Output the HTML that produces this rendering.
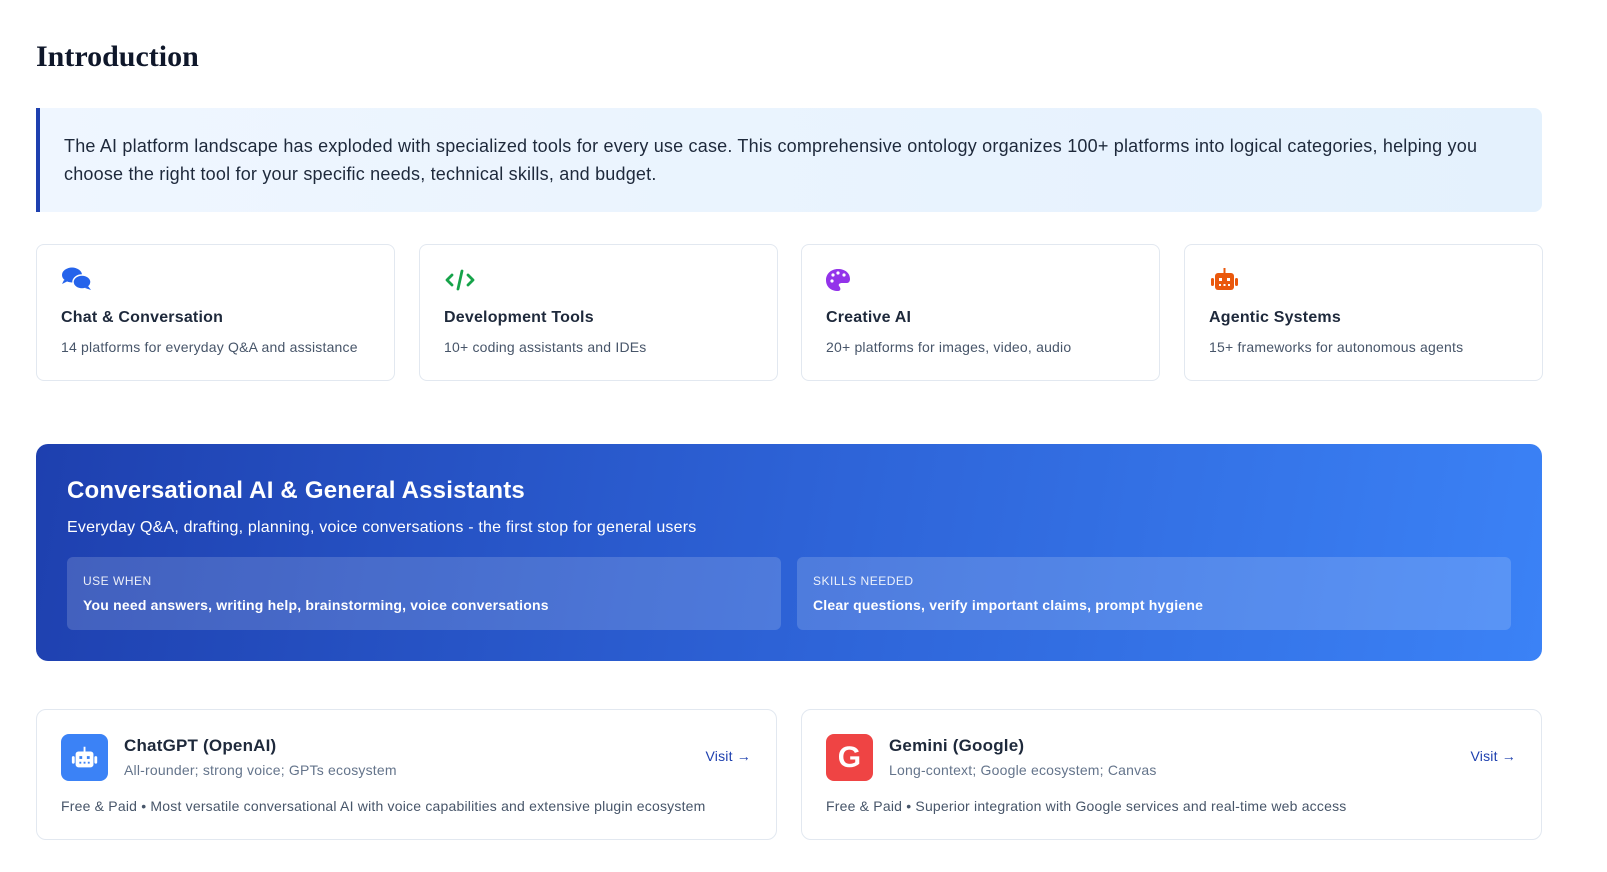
<!DOCTYPE html>
<html><head><meta charset="utf-8"><style>
*{box-sizing:border-box;margin:0;padding:0}
body{width:1607px;height:872px;background:#fff;font-family:"Liberation Sans",sans-serif;color:#1e293b;position:relative;overflow:hidden;letter-spacing:.2px}
h1{position:absolute;left:36px;top:40px;font-family:"Liberation Serif",serif;font-size:30px;font-weight:bold;color:#0f172a;letter-spacing:0}
.intro{position:absolute;left:36px;top:108px;width:1506px;height:104px;border-left:4px solid #1e40af;background:linear-gradient(90deg,#eff6ff,#e4f1fd);border-radius:0 8px 8px 0;padding:24px 24px 0 24px;font-size:18px;line-height:28px;color:#1e293b}
.card{position:absolute;top:244px;width:359px;height:137px;border:1px solid #e2e8f0;border-radius:8px;padding:22px 24px}
.card svg{display:block;height:26px}
.card h3{font-size:16px;font-weight:bold;margin-top:16px;color:#1e293b}
.card p{font-size:14px;color:#475569;margin-top:12px}
.banner{position:absolute;left:36px;top:444px;width:1506px;height:217px;border-radius:12px;background:linear-gradient(100deg,#1e40af 0%,#2d62d6 50%,#3b82f6 100%);color:#fff;padding:33px 31px}
.banner h2{font-size:24px;font-weight:bold}
.banner .sub{font-size:16px;margin-top:14px}
.box{position:absolute;top:113px;width:714px;height:73px;background:rgba(255,255,255,.16);border-radius:6px;padding:17px 16px}
.box .l{font-size:12px;letter-spacing:.5px;opacity:.9}
.box .t{font-size:14px;font-weight:bold;margin-top:9px}
.tool{position:absolute;top:709px;width:741px;height:131px;border:1px solid #e2e8f0;border-radius:10px}
.ic{position:absolute;left:24px;top:24px;width:47px;height:47px;border-radius:8px;display:flex;align-items:center;justify-content:center}
.tool h4{position:absolute;left:87px;top:26px;font-size:17px;font-weight:bold;color:#1e293b}
.tool .s{position:absolute;left:87px;top:52px;font-size:14px;color:#64748b}
.tool .d{position:absolute;left:24px;top:88px;font-size:14px;color:#475569}
.tool .v{position:absolute;right:25px;top:38px;font-size:14px;color:#1e40af}
</style></head><body>
<h1>Introduction</h1>
<div class="intro">The AI platform landscape has exploded with specialized tools for every use case. This comprehensive ontology organizes 100+ platforms into logical categories, helping you<br>choose the right tool for your specific needs, technical skills, and budget.</div>

<div class="card" style="left:36px"><svg width="32" height="26" viewBox="0 0 32 26"><ellipse cx="11" cy="8" rx="10" ry="7.5" fill="#2563eb"/><path d="M3 13 L1 17 L7 14Z" fill="#2563eb"/><ellipse cx="21" cy="15" rx="9" ry="7" fill="#2563eb" stroke="#fff" stroke-width="1.5"/><path d="M27 19 L30 23 L24 21Z" fill="#2563eb"/></svg><h3>Chat &amp; Conversation</h3><p>14 platforms for everyday Q&amp;A and assistance</p></div>
<div class="card" style="left:419px"><svg width="32" height="26" viewBox="0 0 32 26"><path d="M8 8 L3 13 L8 18 M24 8 L29 13 L24 18 M18 4 L14 22" stroke="#16a34a" stroke-width="2.8" fill="none" stroke-linecap="round" stroke-linejoin="round"/></svg><h3>Development Tools</h3><p>10+ coding assistants and IDEs</p></div>
<div class="card" style="left:801px"><svg width="26" height="26" viewBox="0 0 26 26"><path d="M12 2 C5 2 0 7 0 13 C0 20 5 24 12 24 C15 24 15 21 13 19 C12 17 14 16 16 16 L21 16 C23 16 24 14 24 12 C24 6 19 2 12 2Z" fill="#9333ea"/><circle cx="6" cy="14" r="1.6" fill="#fff"/><circle cx="7" cy="8" r="1.6" fill="#fff"/><circle cx="12" cy="6" r="1.6" fill="#fff"/><circle cx="18" cy="8" r="1.6" fill="#fff"/></svg><h3>Creative AI</h3><p>20+ platforms for images, video, audio</p></div>
<div class="card" style="left:1184px"><svg width="32" height="26" viewBox="0 0 32 26"><rect x="14.5" y="1" width="2" height="6" fill="#ea580c"/><rect x="6" y="6" width="19" height="17" rx="3" fill="#ea580c"/><rect x="2" y="11" width="3" height="8" rx="1.5" fill="#ea580c"/><rect x="26" y="11" width="3" height="8" rx="1.5" fill="#ea580c"/><rect x="10" y="11" width="3" height="3" fill="#fff"/><rect x="18" y="11" width="3" height="3" fill="#fff"/><rect x="10" y="17" width="2" height="2" fill="#fff"/><rect x="14.5" y="17" width="2" height="2" fill="#fff"/><rect x="19" y="17" width="2" height="2" fill="#fff"/></svg><h3>Agentic Systems</h3><p>15+ frameworks for autonomous agents</p></div>

<div class="banner"><h2>Conversational AI &amp; General Assistants</h2><div class="sub">Everyday Q&amp;A, drafting, planning, voice conversations - the first stop for general users</div>
<div class="box" style="left:31px"><div class="l">USE WHEN</div><div class="t">You need answers, writing help, brainstorming, voice conversations</div></div>
<div class="box" style="left:761px"><div class="l">SKILLS NEEDED</div><div class="t">Clear questions, verify important claims, prompt hygiene</div></div></div>

<div class="tool" style="left:36px"><div class="ic" style="background:#3b82f6"><svg width="30" height="26" viewBox="0 0 32 26"><rect x="14.5" y="1" width="2" height="6" fill="#fff"/><rect x="6" y="6" width="19" height="17" rx="3" fill="#fff"/><rect x="2" y="11" width="3" height="8" rx="1.5" fill="#fff"/><rect x="26" y="11" width="3" height="8" rx="1.5" fill="#fff"/><rect x="10" y="11" width="3" height="3" fill="#3b82f6"/><rect x="18" y="11" width="3" height="3" fill="#3b82f6"/><rect x="10" y="17" width="2" height="2" fill="#3b82f6"/><rect x="14.5" y="17" width="2" height="2" fill="#3b82f6"/><rect x="19" y="17" width="2" height="2" fill="#3b82f6"/></svg></div><h4>ChatGPT (OpenAI)</h4><div class="s">All-rounder; strong voice; GPTs ecosystem</div><div class="v">Visit →</div><div class="d">Free &amp; Paid • Most versatile conversational AI with voice capabilities and extensive plugin ecosystem</div></div>
<div class="tool" style="left:801px"><div class="ic" style="background:#ef4444"><span style="color:#fff;font-size:30px;font-weight:bold">G</span></div><h4>Gemini (Google)</h4><div class="s">Long-context; Google ecosystem; Canvas</div><div class="v">Visit →</div><div class="d">Free &amp; Paid • Superior integration with Google services and real-time web access</div></div>
</body></html>
